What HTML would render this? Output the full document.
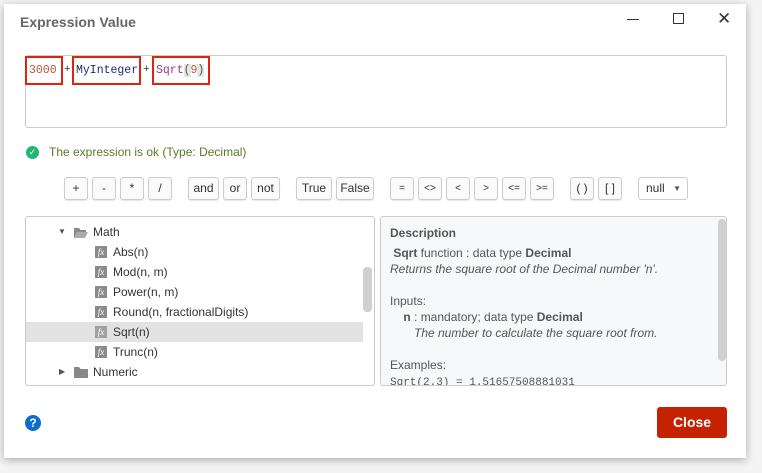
<!DOCTYPE html>
<html><head><meta charset="utf-8"><style>
*{box-sizing:border-box}
body{margin:0;width:762px;height:473px;background:#f4f4f4;font-family:"Liberation Sans",sans-serif;position:relative;overflow:hidden}
.dlg{position:absolute;left:4px;top:4px;width:742px;height:454px;background:#fff;box-shadow:0 2px 8px rgba(0,0,0,.3)}
.a{position:absolute}
.title{left:20px;top:14px;font-size:14px;color:#666;font-weight:bold}
.ed{left:25px;top:55px;width:702px;height:73px;border:1px solid #ccc;border-radius:3px}
.tok{position:absolute;top:56px;height:29px;border:2px solid #e0230f;font-family:"Liberation Mono",monospace;font-size:11.5px;line-height:25px;padding-left:2px;white-space:nowrap}
.mono{font-family:"Liberation Mono",monospace;font-size:11px;color:#333}
.btn{position:absolute;top:177px;height:23px;border:1px solid #ccc;border-radius:3px;background:#fafafa;font-size:12px;color:#333;text-align:center;line-height:21px;box-shadow:0 1px 1px rgba(0,0,0,.1)}
.box{border:1px solid #ccc;border-radius:3px}
.row{position:absolute;left:0;width:340px;font-size:12px;color:#333;height:20px;line-height:20px;white-space:nowrap}
.fx{position:absolute;left:69px;top:4px;width:12px;height:12px;background:#8a8a8a;color:#fff;font:italic 9px "Liberation Serif",serif;line-height:12px;text-align:center}
.desc{font-size:12px;color:#555;line-height:16px}
</style></head><body>
<div class="dlg"></div>
<div class="a title">Expression Value</div>
<div class="a" style="left:627px;top:19px;width:12px;height:1px;background:#333"></div>
<div class="a" style="left:673px;top:13px;width:11px;height:11px;border:1px solid #333"></div>
<div class="a" style="left:717px;top:9px;font-size:17px;color:#333">✕</div>
<div class="a ed"></div>
<div class="tok" style="left:25px;width:38px;color:#b5543a">3000</div>
<div class="a mono" style="left:64px;top:64px">+</div>
<div class="tok" style="left:72px;width:69px;color:#1a2e6e">MyInteger</div>
<div class="a mono" style="left:143px;top:64px">+</div>
<div class="tok" style="left:152px;width:58px;color:#a0339c">Sqrt<span style="background:#e4e8e4;color:#555">(</span><span style="color:#b5543a">9</span><span style="background:#e4e8e4;color:#555">)</span></div>
<div class="a" style="left:26px;top:146px;width:13px;height:13px;border-radius:50%;background:#22b573;color:#fff;font-size:9px;text-align:center;line-height:13px">✓</div>
<div class="a" style="left:49px;top:145px;font-size:12px;color:#5a7a2a">The expression is ok (Type: Decimal)</div>
<div class="btn" style="left:64px;width:24px">+</div>
<div class="btn" style="left:92px;width:24px">-</div>
<div class="btn" style="left:120px;width:24px">*</div>
<div class="btn" style="left:148px;width:24px">/</div>
<div class="btn" style="left:188px;width:31px">and</div>
<div class="btn" style="left:223px;width:24px">or</div>
<div class="btn" style="left:251px;width:29px">not</div>
<div class="btn" style="left:296px;width:36px">True</div>
<div class="btn" style="left:336px;width:38px">False</div>
<div class="btn" style="left:390px;width:24px;font-size:10px">=</div>
<div class="btn" style="left:418px;width:24px;font-size:10px">&lt;&gt;</div>
<div class="btn" style="left:446px;width:24px;font-size:10px">&lt;</div>
<div class="btn" style="left:474px;width:24px;font-size:10px">&gt;</div>
<div class="btn" style="left:502px;width:24px;font-size:10px">&lt;=</div>
<div class="btn" style="left:530px;width:24px;font-size:10px">&gt;=</div>
<div class="btn" style="left:570px;width:24px">( )</div>
<div class="btn" style="left:598px;width:24px">[ ]</div>
<div class="btn" style="left:638px;width:50px;background:#fff;text-align:left;padding-left:7px;box-shadow:none">null<span style="position:absolute;right:6px;top:0;font-size:8px;color:#555">▼</span></div>
<div class="a box" style="left:25px;top:216px;width:350px;height:170px;overflow:hidden">
 <div class="a" style="left:0;top:105px;width:337px;height:20px;background:#e2e2e2"></div>
 <div class="a" style="left:337px;top:50px;width:9px;height:45px;background:#d0d0d0;border-radius:4px"></div>
 <div class="row" style="top:5px"><span class="a" style="left:32px;font-size:8px;color:#555">▼</span><svg class="a" style="left:47px;top:4px" width="16" height="13"><path d="M1 2h5l1.5 2H13v2H4L1 12z" fill="#888"/><path d="M4 6h11l-3 6H1z" fill="#aaa"/></svg><span class="a" style="left:67px">Math</span></div>
 <div class="row" style="top:25px"><span class="fx">fx</span><span class="a" style="left:87px">Abs(n)</span></div>
 <div class="row" style="top:45px"><span class="fx">fx</span><span class="a" style="left:87px">Mod(n, m)</span></div>
 <div class="row" style="top:65px"><span class="fx">fx</span><span class="a" style="left:87px">Power(n, m)</span></div>
 <div class="row" style="top:85px"><span class="fx">fx</span><span class="a" style="left:87px">Round(n, fractionalDigits)</span></div>
 <div class="row" style="top:105px"><span class="fx" style="background:#a0a0a0">fx</span><span class="a" style="left:87px">Sqrt(n)</span></div>
 <div class="row" style="top:125px"><span class="fx">fx</span><span class="a" style="left:87px">Trunc(n)</span></div>
 <div class="row" style="top:145px"><span class="a" style="left:33px;font-size:8px;color:#555">▶</span><svg class="a" style="left:47px;top:4px" width="16" height="13"><path d="M1 1h5l1.5 2H15v9H1z" fill="#888"/></svg><span class="a" style="left:67px">Numeric</span></div>
</div>
<div class="a box" style="left:380px;top:216px;width:347px;height:170px;background:#f7f8fa;overflow:hidden">
 <div class="a" style="left:337px;top:2px;width:8px;height:142px;background:#d0d0d0;border-radius:4px"></div>
 <div class="a desc" style="left:9px;top:8px;width:330px">
  <b>Description</b><br>
  <div style="margin-top:4px">&nbsp;<b>Sqrt</b> function : data type <b>Decimal</b></div>
  <i>Returns the square root of the Decimal number 'n'.</i><br><br>
  Inputs:<br>
  &nbsp;&nbsp;&nbsp;&nbsp;<b>n</b> : mandatory; data type <b>Decimal</b><br>
  <i style="padding-left:24px">The number to calculate the square root from.</i><br><br>
  Examples:<br>
  <span class="mono" style="color:#555">Sqrt(2.3) = 1.51657508881031</span>
 </div>
</div>
<div class="a" style="left:25px;top:415px;width:16px;height:16px;border-radius:50%;background:#0a6ed1;color:#fff;font-size:12px;font-weight:bold;text-align:center;line-height:16px">?</div>
<div class="a" style="left:657px;top:407px;width:70px;height:31px;background:#c42200;border-radius:3px;color:#fff;font-size:14px;font-weight:bold;text-align:center;line-height:31px">Close</div>
</body></html>
